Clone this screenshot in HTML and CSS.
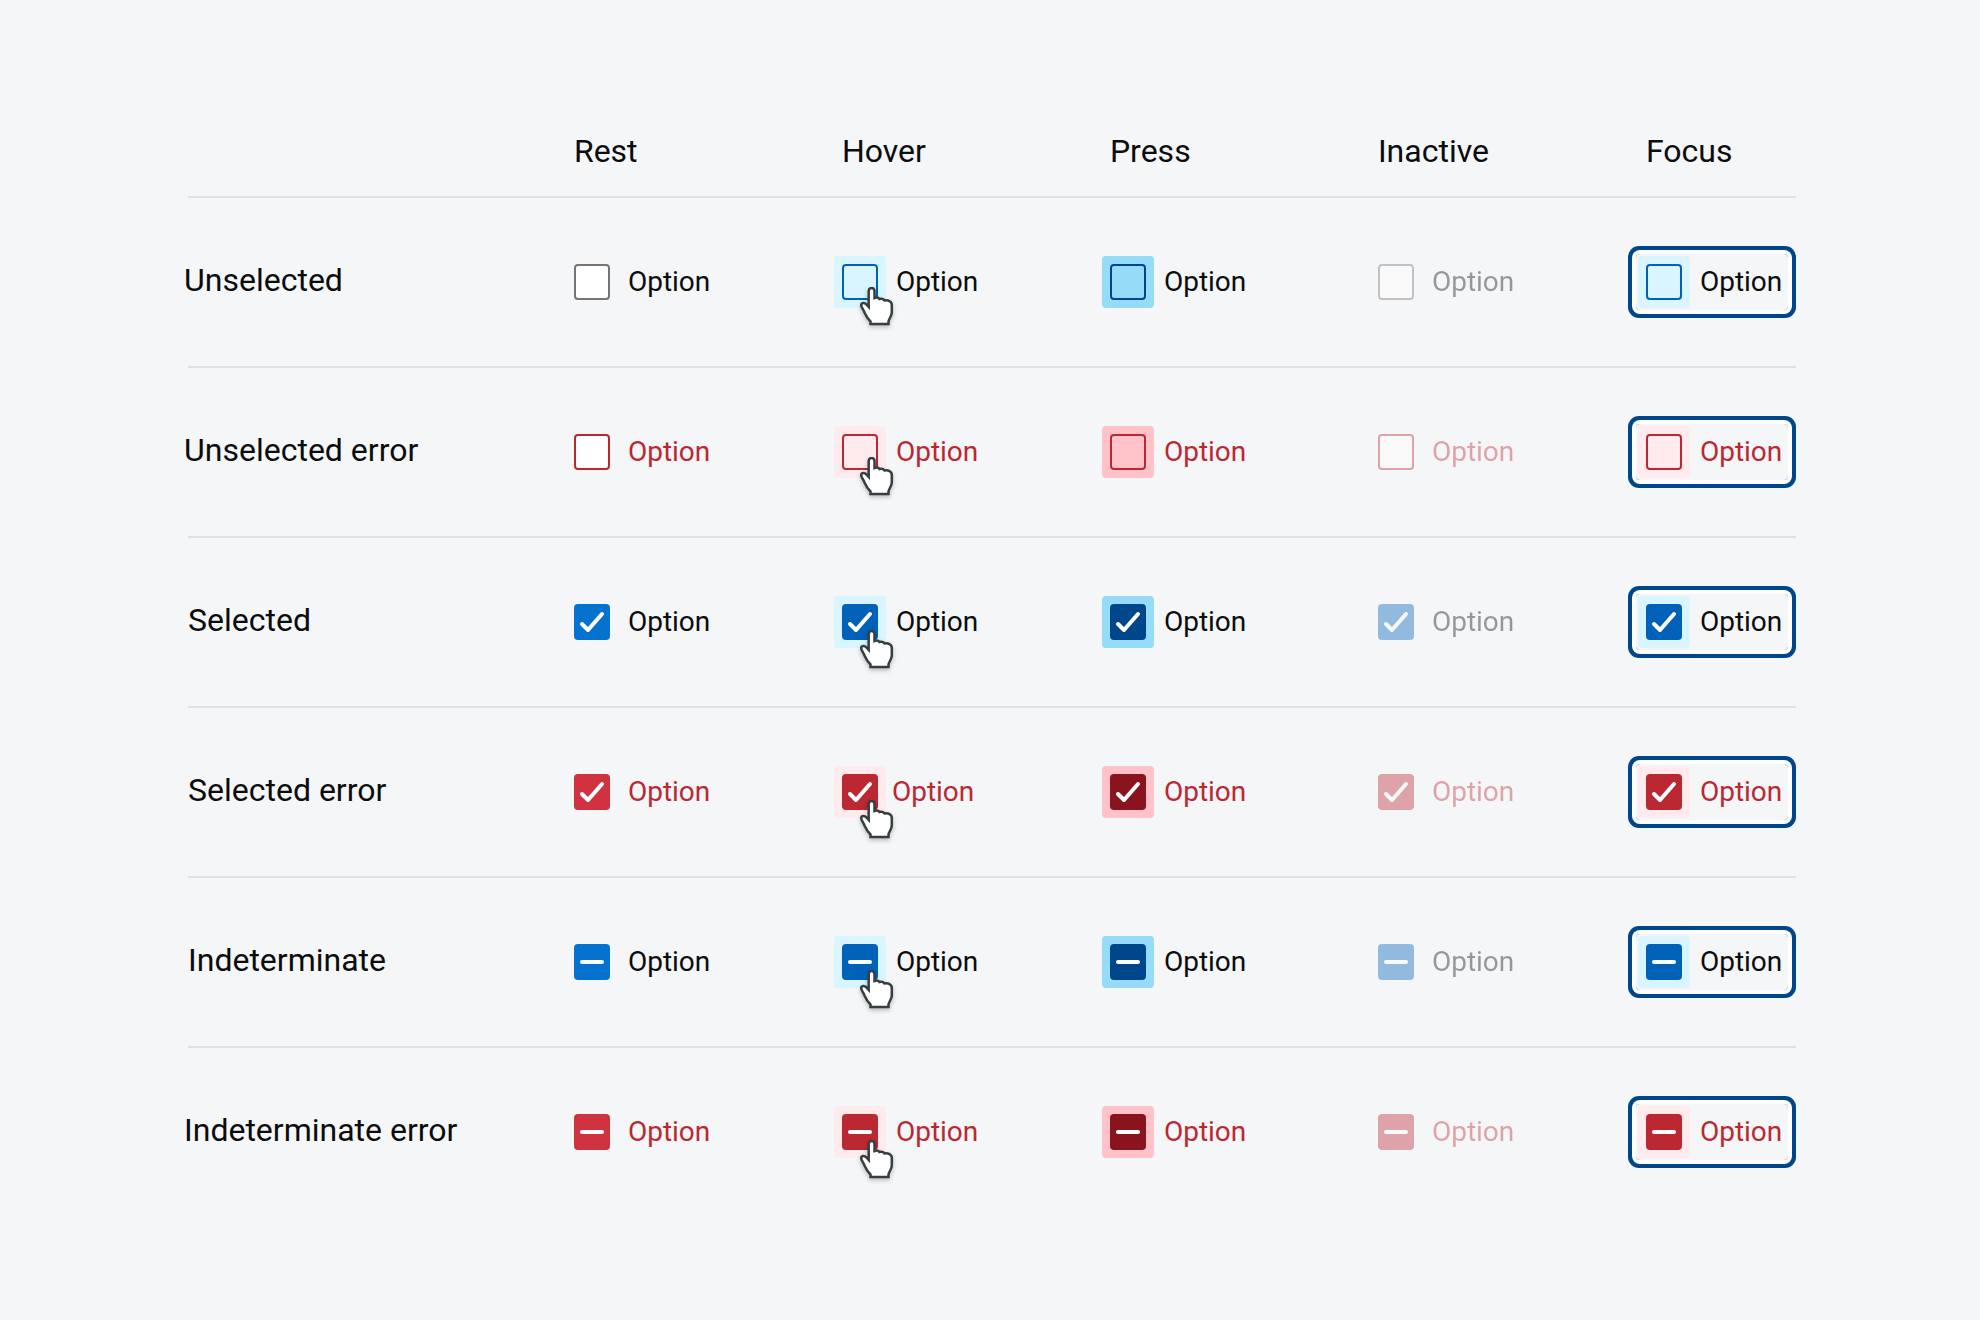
FILE: index.html
```html
<!DOCTYPE html>
<html lang="en">
<head>
<meta charset="utf-8">
<title>Checkbox states</title>
<link rel="stylesheet" href="styles.css">
</head>
<body>
<svg class="symbols" aria-hidden="true">
  <symbol id="check" viewBox="0 0 36 36"><path d="M8 20l6 6L28 10" fill="none" stroke="#fff" stroke-width="4" stroke-linecap="round" stroke-linejoin="round"/></symbol>
  <symbol id="dash" viewBox="0 0 36 36"><path d="M8 18h20" fill="none" stroke="#fff" stroke-width="4" stroke-linecap="round"/></symbol>
  <symbol id="hand" viewBox="0 0 34 40"><path d="M10.5 37V34.500C8 32 6 29 4.500 25.500C3.500 22.500 1.200 20.500 1.200 18C1.200 15.500 4.500 15.500 6.500 17.500L8.700 20V4C8.700 0 14.500 0 14.500 4V11C16 10.500 18.500 10.500 19.500 12C21.500 11.500 23.500 12 24.500 13.500C28 13 31.800 14 31.800 18V25.500C31.800 29 29 31.500 28.500 34.500V37Z" fill="#fff" stroke="#373e40" stroke-width="2.500"/></symbol>
</svg>
<main class="page">
  <table class="states">
    <colgroup><col class="col-name"><col class="col-state"><col class="col-state"><col class="col-state"><col class="col-state"><col></colgroup>
    <thead>
      <tr><td></td><th scope="col">Rest</th><th scope="col">Hover</th><th scope="col">Press</th><th scope="col">Inactive</th><th scope="col">Focus</th></tr>
    </thead>
    <tbody id="rows"></tbody>
  </table>
</main>
<script src="script.js"></script>
</body>
</html>
```
FILE: script.js
```js
const rows = [
  { name: "Unselected", kind: "empty", outdent: true, high: true },
  { name: "Unselected error", kind: "empty", error: true, outdent: true, high: true },
  { name: "Selected", kind: "check" },
  { name: "Selected error", kind: "check", error: true, tight: true },
  { name: "Indeterminate", kind: "dash" },
  { name: "Indeterminate error", kind: "dash", error: true, outdent: true }
];
const states = ["rest", "hover", "press", "inactive", "focus"];

function option(row, state) {
  const classes = ["option", "is-" + state, "is-" + (row.kind === "empty" ? "empty" : "filled")];
  if (row.error) classes.push("is-error");
  if (row.tight && state === "hover") classes.push("is-tight");
  const mark = row.kind === "empty" ? "" : `<svg class="mark" aria-hidden="true"><use href="#${row.kind}"/></svg>`;
  const hand = state === "hover" ? `<svg class="hand${row.high ? " hand-high" : ""}" aria-hidden="true"><use href="#hand"/></svg>` : "";
  const attrs = (row.kind === "check" ? " checked" : "") + (state === "inactive" ? " disabled" : "");
  return `<td><label class="${classes.join(" ")}"><span class="box"><input type="checkbox"${attrs}>${mark}${hand}</span><span>Option</span></label></td>`;
}

document.getElementById("rows").innerHTML = rows.map(row =>
  `<tr data-kind="${row.kind}"><th scope="row"${row.outdent ? ' class="outdent"' : ""}><span>${row.name}</span></th>${states.map(s => option(row, s)).join("")}</tr>`
).join("");

document.querySelectorAll('[data-kind="dash"] input').forEach(input => { input.indeterminate = true; });
```
FILE: styles.css
```css
* { box-sizing: border-box; }

body {
  margin: 0;
  background: #f5f6f8;
  color: #0c0c0c;
  font-family: Roboto, "Liberation Sans", sans-serif;
}

.symbols { display: none; }

.page { padding: 131px 184px 100px 188px; }

.states {
  width: 100%;
  table-layout: fixed;
  border-collapse: separate;
  border-spacing: 0;
}

.col-name { width: 24%; }
.col-state { width: 16.667%; }

.states th, .states td {
  padding: 0;
  text-align: left;
  white-space: nowrap;
}

.states th {
  font-size: 32px;
  line-height: 40px;
  font-weight: 400;
}

.states thead th { padding-bottom: 25px; }

.states tbody th, .states tbody td {
  height: 170px;
  border-top: 2px solid #dfe0e2;
  vertical-align: middle;
}

.states tbody th { padding-bottom: 4px; }
.outdent span { margin-left: -4px; }

.option {
  --ink: #0c0c0c;
  --line: #757575;
  --fill: #fff;
  --halo: transparent;
  display: inline-flex;
  align-items: center;
  gap: 18px;
  margin-left: -10px;
  padding: 10px 6px 10px 10px;
  border-radius: 4px;
  color: var(--ink);
  font-size: 28px;
  line-height: 36px;
  vertical-align: middle;
}

.box {
  position: relative;
  display: grid;
  width: 36px;
  height: 36px;
}

.box::before {
  content: "";
  grid-area: 1 / 1;
  margin: -8px;
  border-radius: 4px;
  background: var(--halo);
}

.box input {
  appearance: none;
  grid-area: 1 / 1;
  width: 36px;
  height: 36px;
  margin: 0;
  border: 2px solid var(--line);
  border-radius: 4px;
  background: var(--fill);
}

.mark {
  grid-area: 1 / 1;
  width: 36px;
  height: 36px;
  z-index: 1;
  pointer-events: none;
}

.hand {
  position: absolute;
  top: 26px;
  left: 18px;
  width: 34px;
  height: 40px;
  z-index: 2;
  pointer-events: none;
  overflow: visible;
  filter: drop-shadow(0 2px 2px rgba(0, 0, 0, 0.25));
}
.hand-high { top: 23px; }

.is-tight { gap: 14px; }

.is-empty.is-hover, .is-empty.is-focus { --line: #0061b8; --fill: #d9f5ff; }
.is-empty.is-press { --line: #00468b; --fill: #96dcf9; }
.is-hover, .is-focus { --halo: #d9f5ff; }
.is-press { --halo: #96dcf9; }

.is-filled { --line: #0061b8; --fill: #0061b8; }
.is-filled.is-rest { --line: #0672cf; --fill: #0672cf; }
.is-filled.is-press { --line: #00468b; --fill: #00468b; }

.is-error { --ink: #bb2832; }
.is-error.is-hover, .is-error.is-focus { --halo: #ffebee; }
.is-error.is-press { --halo: #ffc2c9; }
.is-error.is-empty { --line: #bb2832; }
.is-error.is-empty.is-hover, .is-error.is-empty.is-focus { --fill: #ffebee; }
.is-error.is-empty.is-press { --fill: #ffc2c9; }
.is-error.is-filled { --line: #bb2832; --fill: #bb2832; }
.is-error.is-filled.is-rest { --line: #d0333f; --fill: #d0333f; }
.is-error.is-filled.is-press { --line: #8a141e; --fill: #8a141e; }

.is-inactive { opacity: 0.4; }

.is-focus { box-shadow: 0 0 0 4px #fff, 0 0 0 8px #00468b; }
```
